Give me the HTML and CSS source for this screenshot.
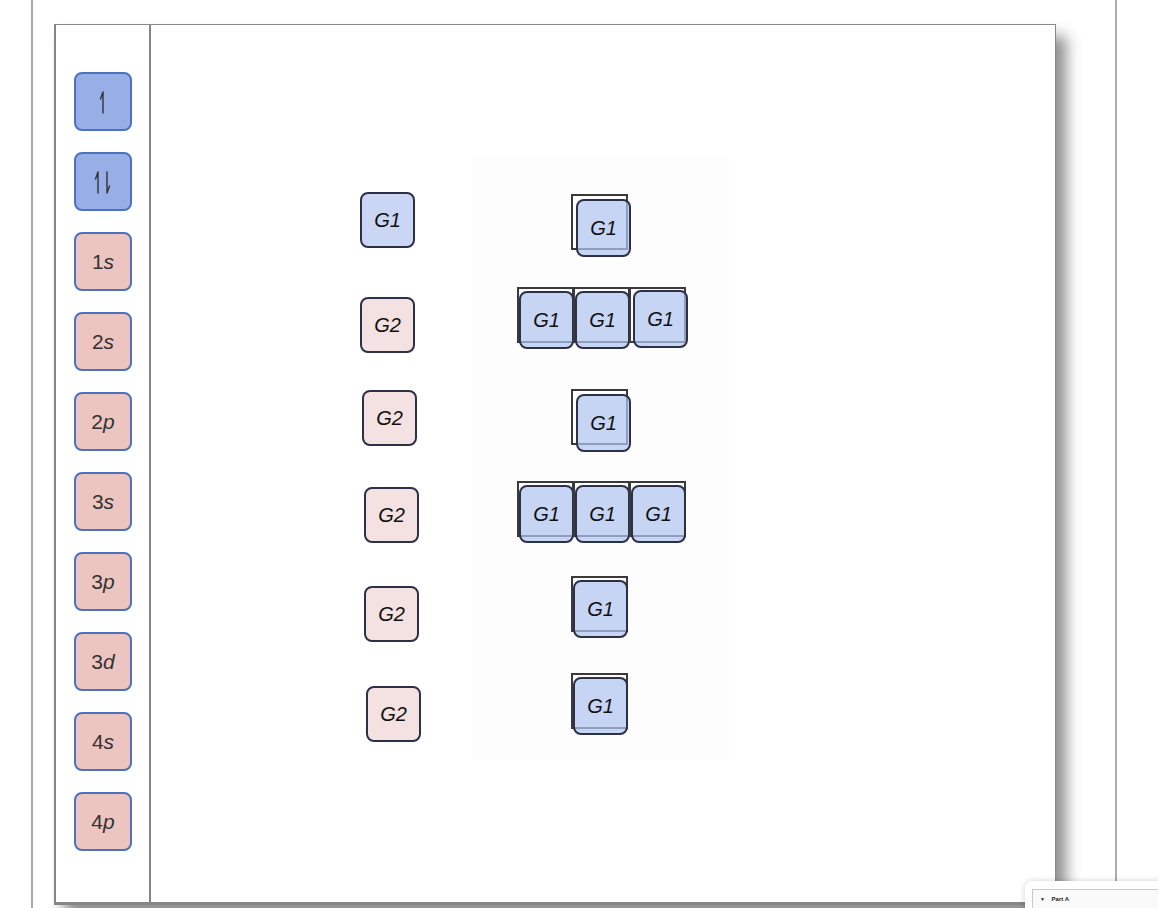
FILE: index.html
```html
<!DOCTYPE html>
<html lang="en">
<head>
    <meta charset="UTF-8">
    <title>Orbital Diagram</title>
    <link rel="stylesheet" href="styles.css">
</head>
<body>

<div class="frame">

  <!-- The board -->
  <div class="board">

    <!-- Palette of draggable labels -->
    <div class="palette">
      <div class="chip chip-blue">
        <svg width="24" height="26" viewBox="0 0 24 26">
          <path d="M12 3 L12 24 M12 3 L9.5 10" />
        </svg>
      </div>
      <div class="chip chip-blue">
        <svg width="24" height="26" viewBox="0 0 24 26">
          <path d="M7 3 L7 24 M7 3 L4.5 10" />
          <path d="M16 3 L16 24 M16 24 L18.5 17" />
        </svg>
      </div>
      <div class="chip chip-pink">1<i>s</i></div>
      <div class="chip chip-pink">2<i>s</i></div>
      <div class="chip chip-pink">2<i>p</i></div>
      <div class="chip chip-pink">3<i>s</i></div>
      <div class="chip chip-pink">3<i>p</i></div>
      <div class="chip chip-pink">3<i>d</i></div>
      <div class="chip chip-pink">4<i>s</i></div>
      <div class="chip chip-pink">4<i>p</i></div>
    </div>

    <!-- Drop canvas -->
    <div class="canvas">
      <div class="drop-zone"></div>

      <div class="tile tile-g1 free" style="left:209px; top:167px;">G1</div>
      <div class="tile tile-g2 free" style="left:209px; top:272px;">G2</div>
      <div class="tile tile-g2 free" style="left:211px; top:365px;">G2</div>
      <div class="tile tile-g2 free" style="left:213px; top:462px;">G2</div>
      <div class="tile tile-g2 free" style="left:213px; top:561px;">G2</div>
      <div class="tile tile-g2 free" style="left:215px; top:661px;">G2</div>

      <div class="slots" style="left:420px; top:169px;">
        <div class="cell"><div class="tile tile-g1 placed">G1</div></div>
      </div>
      <div class="slots" style="left:366px; top:262px;">
        <div class="cell"><div class="tile tile-g1 placed near">G1</div></div>
        <div class="cell"><div class="tile tile-g1 placed near">G1</div></div>
        <div class="cell"><div class="tile tile-g1 placed high">G1</div></div>
      </div>
      <div class="slots" style="left:420px; top:364px;">
        <div class="cell"><div class="tile tile-g1 placed">G1</div></div>
      </div>
      <div class="slots" style="left:366px; top:456px;">
        <div class="cell"><div class="tile tile-g1 placed near">G1</div></div>
        <div class="cell"><div class="tile tile-g1 placed near">G1</div></div>
        <div class="cell"><div class="tile tile-g1 placed near">G1</div></div>
      </div>
      <div class="slots" style="left:420px; top:551px;">
        <div class="cell"><div class="tile tile-g1 placed near">G1</div></div>
      </div>
      <div class="slots" style="left:420px; top:648px;">
        <div class="cell"><div class="tile tile-g1 placed near">G1</div></div>
      </div>
    </div>

  </div>

</div>

<!-- Part panel peeking at the corner -->
<div class="part-panel">
  <div class="part-head"><span class="caret">&#9660;</span> Part A</div>
</div>

</body>
</html>
```

FILE: styles.css
```css
html, body {
    margin: 0;
    height: 908px;
    overflow: hidden;
    background: #fff;
    font-family: "Liberation Sans", Arial, sans-serif;
}

/* Outer frame with the two grey rails */
.frame {
    box-sizing: border-box;
    margin-left: 31px;
    width: 1086px;
    height: 908px;
    border-left: 2px solid #ababab;
    border-right: 2px solid #ababab;
    padding: 24px 0 0 21px;
}

/* The board */
.board {
    box-sizing: border-box;
    width: 1002px;
    height: 881px;
    display: flex;
    background: #fff;
    border-top: 1px solid #8a8a8a;
    border-right: 1px solid #8a8a8a;
    border-left: 2px solid #858585;
    border-bottom: 3px solid #858585;
    box-shadow: 10px 12px 14px rgba(0,0,0,0.45);
}

/* Palette */
.palette {
    box-sizing: border-box;
    width: 95px;
    flex-shrink: 0;
    border-right: 2px solid #858585;
    padding-top: 47px;
    display: flex;
    flex-direction: column;
    align-items: center;
    gap: 21px;
}

.chip {
    box-sizing: border-box;
    width: 58px;
    height: 59px;
    border: 2px solid #4d70c0;
    border-radius: 8px;
    display: flex;
    align-items: center;
    justify-content: center;
    font-size: 21px;
    color: #333;
    margin-left: 1px;
}

.chip i {
    font-style: italic;
}

.chip-blue {
    background-color: #98aee7;
}

.chip-pink {
    background-color: #ecc4c0;
}

.chip svg path {
    fill: none;
    stroke: #333;
    stroke-width: 1.4;
    stroke-linecap: round;
}

/* Drop canvas */
.canvas {
    position: relative;
    flex: 1;
}

.drop-zone {
    position: absolute;
    left: 321px;
    top: 133px;
    width: 258px;
    height: 602px;
    background-color: #fdfdfd;
}

.tile {
    box-sizing: border-box;
    width: 55px;
    height: 56px;
    border: 2px solid #2d3047;
    border-radius: 8px;
    display: flex;
    align-items: center;
    justify-content: center;
    font-size: 20px;
    font-style: italic;
    color: #111;
}

.tile-g1 {
    background-color: #cad6f3;
}

.tile-g2 {
    background-color: #f4e1e1;
}

.free {
    position: absolute;
}

/* Target slots */
.slots {
    position: absolute;
    display: flex;
}

.cell {
    position: relative;
    box-sizing: border-box;
    width: 57px;
    height: 56px;
    border: 2px solid #3a3a3a;
}

.cell + .cell {
    margin-left: -1px;
}

.tile.placed {
    position: absolute;
    left: 3px;
    top: 3px;
    width: 55px;
    height: 58px;
    background-color: rgba(178, 197, 240, 0.72);
}

.tile.placed.near {
    left: 0px;
    top: 2px;
}

.tile.placed.high {
    left: 2px;
    top: 1px;
}

/* Part panel */
.part-panel {
    position: absolute;
    left: 1025px;
    top: 881px;
    width: 140px;
    height: 40px;
    background: #fff;
    border-top-left-radius: 7px;
    box-shadow: 0 0 6px rgba(0,0,0,0.18);
}

.part-head {
    margin: 8px 0 0 7px;
    height: 30px;
    border-top: 1px solid #c9c9c9;
    border-left: 1px solid #c9c9c9;
    background: #fafafa;
    font-size: 6px;
    font-weight: bold;
    color: #222;
    padding: 6px 0 0 7px;
    box-sizing: border-box;
}

.caret {
    font-size: 5px;
    margin-right: 5px;
}
```
